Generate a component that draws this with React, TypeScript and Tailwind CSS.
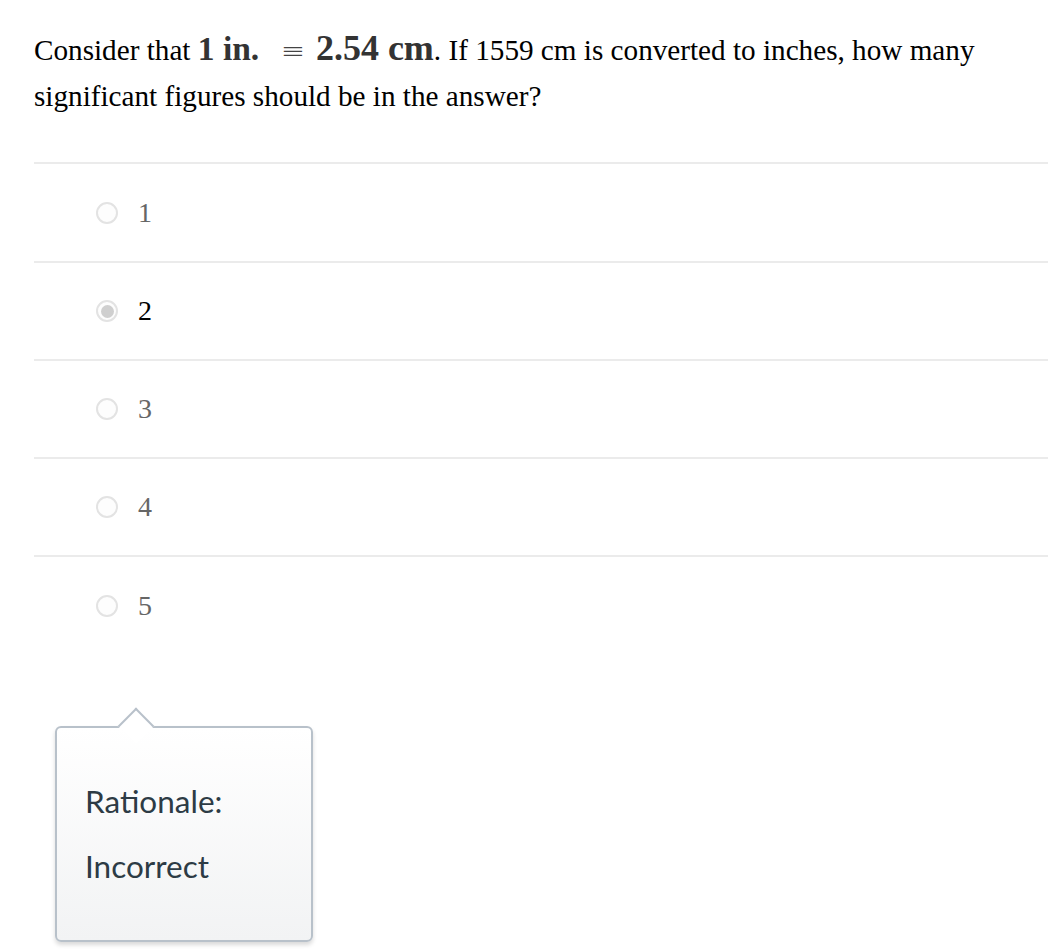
import React from 'react';

const options = ['1', '2', '3', '4', '5'];
const selected = '2';

const Radio: React.FC<{ checked: boolean }> = ({ checked }) => (
  <span className="flex h-[22px] w-[22px] items-center justify-center rounded-full border-2 border-[#e3e3e3] bg-[#fdfdfd]">
    {checked && <span className="h-[13px] w-[13px] rounded-full bg-[#cfcfcf]" />}
  </span>
);

const App: React.FC = () => {
  return (
    <div className="min-h-screen bg-white pl-[34px] pt-[27px] font-['Liberation_Serif','Times_New_Roman',serif]">
      {/* Question */}
      <p className="text-[29.2px] leading-[46px] text-black">
        Consider that{' '}
        <span className="text-[33.5px] font-bold leading-[40px] text-[#333]">1 in.</span>
        <span className="ml-[27px] mr-[15px] inline-block scale-x-150 text-[26px] font-light leading-[40px] text-[#444]">≡</span>
        <span className="text-[36px] font-bold leading-[40px] text-[#333]">2.54 cm</span>. If 1559 cm is
        converted to inches, how many significant figures should be in the answer?
      </p>

      {/* Options */}
      <div className="mt-[43px]">
        {options.map((opt, index) => (
          <div
            key={opt}
            className={`flex items-center gap-[20px] pl-[62px] ${
              index < options.length - 1 ? 'border-b-2 border-[#ebebeb]' : ''
            } ${index === 0 ? 'h-[101px] border-t-2' : 'h-[98px]'}`}
          >
            <Radio checked={opt === selected} />
            <span className={`text-[28px] ${opt === selected ? 'text-black' : 'text-[#666]'}`}>{opt}</span>
          </div>
        ))}
      </div>

      {/* Rationale popover */}
      <div className="relative ml-[21px] mt-[71px] w-[258px]">
        <div className="absolute left-[68px] top-[-13px] z-10 h-[26px] w-[26px] rotate-45 border-l-2 border-t-2 border-[#b8c1ca] bg-white" />
        <div className="h-[216px] rounded-[6px] border-2 border-[#b8c1ca] bg-gradient-to-b from-white to-[#f2f3f4] pl-[28px] pt-[53px] font-['Lato',sans-serif] text-[31.5px] text-[#2d3b45] shadow-[0_3px_4px_rgba(0,0,0,0.15)]">
          <p className="leading-[40px]">Rationale:</p>
          <p className="mt-[25px] leading-[40px]">Incorrect</p>
        </div>
      </div>
    </div>
  );
};

export default App;
